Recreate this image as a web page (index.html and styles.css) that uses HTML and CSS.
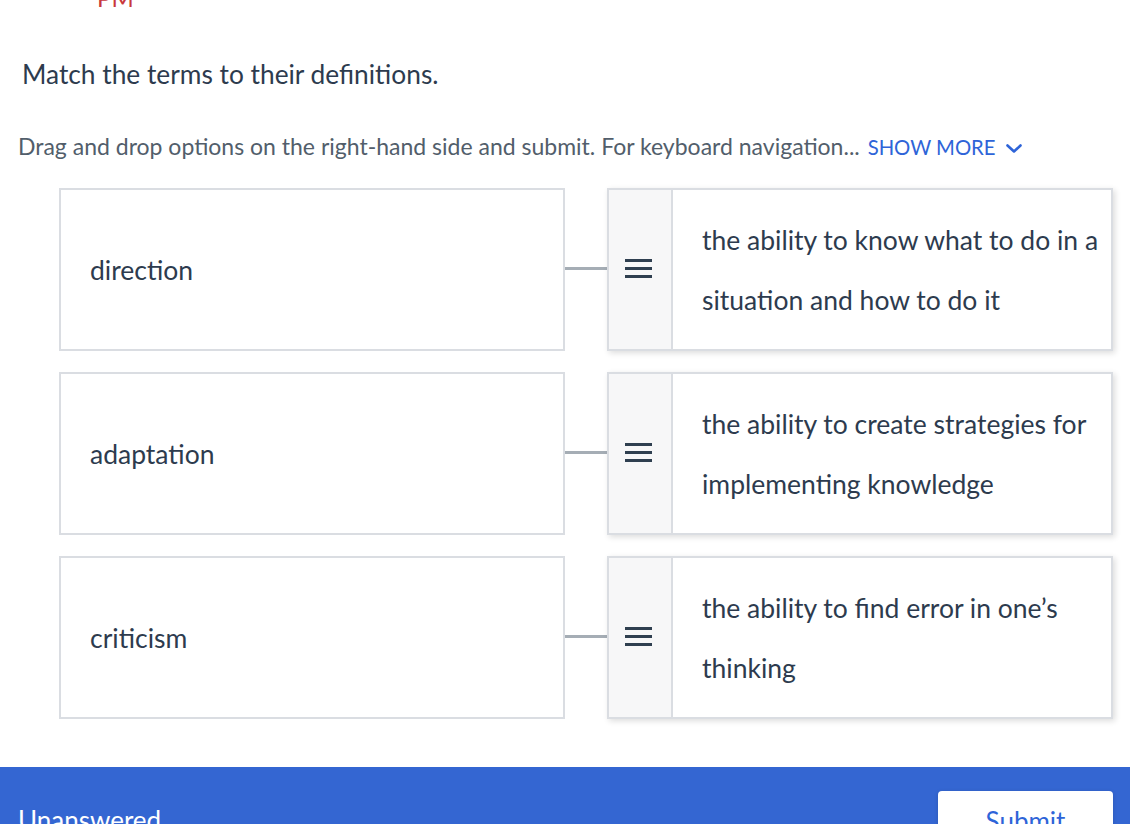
FILE: index.html
```html
<!DOCTYPE html>
<html>
<head>
<meta charset="utf-8">
<link rel="stylesheet" href="styles.css">
</head>
<body>
<div class="time"><span>PM</span></div>
<h1 class="title">Match the terms to their definitions.</h1>
<p class="instructions">Drag and drop options on the right-hand side and submit. For keyboard navigation... <span class="show-more">SHOW MORE <svg class="chev" width="18" height="11" viewBox="0 0 18 11"><path d="M2.5 2.5 L9 8.5 L15.5 2.5" fill="none" stroke="currentColor" stroke-width="2.6" stroke-linecap="round" stroke-linejoin="round"/></svg></span></p>
<div class="pairs">
  <div class="term">direction</div>
  <div class="connector"><span class="line"></span></div>
  <div class="card">
    <div class="handle"><span class="bars"><i></i><i></i><i></i></span></div>
    <div class="def">the ability to know what to do in a situation and how to do it</div>
  </div>

  <div class="term">adaptation</div>
  <div class="connector"><span class="line"></span></div>
  <div class="card">
    <div class="handle"><span class="bars"><i></i><i></i><i></i></span></div>
    <div class="def">the ability to create strategies for implementing knowledge</div>
  </div>

  <div class="term">criticism</div>
  <div class="connector"><span class="line"></span></div>
  <div class="card">
    <div class="handle"><span class="bars"><i></i><i></i><i></i></span></div>
    <div class="def">the ability to find error in one’s thinking</div>
  </div>
</div>
<div class="footer">
  <span class="status">Unanswered</span>
  <button class="submit">Submit</button>
</div>
</body>
</html>
```
FILE: styles.css
```css
html, body {
  margin: 0;
  padding: 0;
  background: #ffffff;
}
body {
  font-family: "Lato", "Noto Sans", sans-serif;
  color: #2d3b4e;
  overflow: hidden;
  height: 824px;
}
.time {
  height: 8px;
  overflow: hidden;
  color: #c8383c;
  font-size: 24px;
  padding-left: 97px;
}
.time span {
  display: block;
  line-height: 24px;
  margin-top: -14px;
}
.title {
  margin: 51px 0 0 22px;
  font-size: 26.3px;
  font-weight: 400;
  line-height: 30px;
  color: #2d3b4e;
}
.instructions {
  margin: 42px 0 0 18px;
  font-size: 23px;
  line-height: 30px;
  color: #525e6b;
  white-space: nowrap;
}
.show-more {
  color: #2e64d8;
  font-size: 20.3px;
  margin-left: 2px;
}
.chev {
  margin-left: 4px;
  vertical-align: middle;
  position: relative;
  top: -1px;
}
.pairs {
  margin: 26px 0 0 59px;
  display: grid;
  grid-template-columns: 506px 42px 506px;
  grid-auto-rows: 163px;
  row-gap: 21px;
}
.term {
  border: 2px solid #dadde2;
  display: flex;
  align-items: center;
  padding-left: 29px;
  font-size: 26.5px;
  color: #2d3b4e;
}
.connector {
  display: flex;
  align-items: center;
}
.line {
  display: block;
  width: 100%;
  height: 3px;
  background: #a5adb5;
  margin-top: -2px;
}
.card {
  border: 2px solid #dadde2;
  box-shadow: 2px 2px 6px rgba(0, 0, 0, 0.14);
  display: flex;
  background: #fff;
}
.handle {
  width: 62px;
  flex: none;
  background: #f7f7f8;
  border-right: 2px solid #dadde2;
  display: flex;
  align-items: center;
  justify-content: center;
}
.bars {
  display: flex;
  flex-direction: column;
  gap: 5px;
  width: 27px;
  margin-left: -3px;
  margin-top: -3px;
}
.bars i {
  display: block;
  height: 3px;
  background: #2f3f50;
}
.def {
  display: flex;
  align-items: center;
  padding: 0 2px 0 29px;
  font-size: 26.5px;
  line-height: 60px;
  color: #2d3b4e;
}
.footer {
  margin-top: 48px;
  background: #3466d2;
  height: 57px;
  overflow: hidden;
  display: flex;
  justify-content: space-between;
  align-items: flex-start;
  padding: 0 17px 0 18px;
}
.status {
  color: #ffffff;
  font-size: 26px;
  line-height: 30px;
  margin-top: 38px;
  flex: none;
}
.submit {
  margin-top: 24px;
  width: 175px;
  height: 60px;
  flex: none;
  background: #ffffff;
  border: none;
  border-radius: 4px;
  color: #2e64d8;
  font-family: inherit;
  font-size: 26px;
  padding: 0;
  box-shadow: 0 1px 4px rgba(0, 0, 0, 0.15);
}
```
